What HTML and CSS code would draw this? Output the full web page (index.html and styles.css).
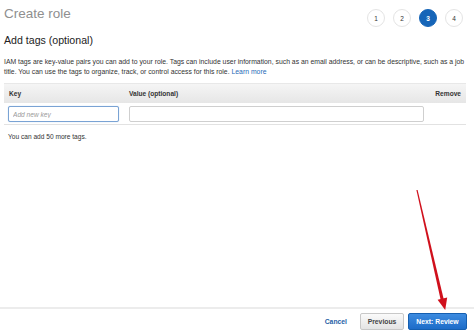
FILE: index.html
```html
<!DOCTYPE html>
<html>
<head>
<meta charset="utf-8">
<link rel="stylesheet" href="styles.css">
</head>
<body>
<div class="page">
  <div class="main">
    <div class="top">
      <h1 class="title">Create role</h1>
      <ol class="steps">
        <li class="step">1</li>
        <li class="step">2</li>
        <li class="step active">3</li>
        <li class="step">4</li>
      </ol>
    </div>
    <h2 class="subtitle">Add tags (optional)</h2>
    <p class="desc">IAM tags are key-value pairs you can add to your role. Tags can include user information, such as an email address, or can be descriptive, such as a job title. You can use the tags to organize, track, or control access for this role. <a class="link" href="#">Learn more</a></p>
    <div class="table">
      <div class="th th-key">Key</div>
      <div class="th th-value">Value (optional)</div>
      <div class="th th-remove">Remove</div>
      <div class="td td-key"><input class="input input-focus" placeholder="Add new key"></div>
      <div class="td td-value"><input class="input input-value"></div>
      <div class="td td-remove"></div>
    </div>
    <p class="note">You can add 50 more tags.</p>
  </div>
  <div class="footer">
    <a class="cancel" href="#">Cancel</a>
    <button class="btn btn-prev">Previous</button>
    <button class="btn btn-next">Next: Review</button>
  </div>
  <svg class="arrow" width="474" height="332" viewBox="0 0 474 332">
    <polygon points="417.6,189.9 416.4,190.1 440.8,300.4 443.8,299.6" fill="#d0101c"/>
    <polygon points="437.6,299.8 447.2,297.6 445.2,310" fill="#d0101c"/>
  </svg>
</div>
</body>
</html>
```
FILE: styles.css
```css
* { box-sizing: border-box; }
html, body { margin: 0; padding: 0; }
body {
  width: 474px;
  height: 332px;
  overflow: hidden;
  background: #fff;
  font-family: "Liberation Sans", Arial, sans-serif;
  color: #333;
}
.page {
  position: relative;
  width: 474px;
  height: 332px;
  display: flex;
  flex-direction: column;
}
.main {
  padding: 0 8px 0 4px;
  flex: 1;
}
.top {
  display: flex;
  justify-content: space-between;
  align-items: flex-start;
  padding-top: 4px;
}
.title {
  margin: 0;
  font-size: 13.5px;
  font-weight: normal;
  color: #8f8f8f;
  line-height: 19px;
}
.steps {
  list-style: none;
  margin: 5px 3px 0 0;
  padding: 0;
  display: flex;
  gap: 8px;
}
.step {
  width: 18px;
  height: 18px;
  border-radius: 50%;
  border: 1px solid #e4e4e4;
  font-size: 6.5px;
  color: #333;
  display: flex;
  align-items: center;
  justify-content: center;
}
.step.active {
  background: #1665b8;
  border-color: #1665b8;
  color: #fff;
  font-weight: bold;
}
.subtitle {
  margin: 6px 0 0 0;
  font-size: 10.6px;
  font-weight: normal;
  color: #222;
  line-height: 14px;
}
.desc {
  margin: 10px 0 0 0;
  font-size: 6.85px;
  line-height: 10px;
  color: #333;
}
.link {
  color: #1f6bb8;
  text-decoration: none;
}
.table {
  margin-top: 6px;
  display: grid;
  grid-template-columns: 125px 295px 1fr;
  border-bottom: 1px solid #e2e2e2;
}
.th {
  height: 20px;
  display: flex;
  align-items: center;
  font-size: 6.6px;
  font-weight: bold;
  color: #333;
  background: linear-gradient(#f5f5f5, #e6e6e6);
  border-top: 1px solid #e8e8e8;
}
.th-key { padding-left: 5px; }
.th-remove { justify-content: flex-end; padding-right: 5px; }
.td {
  padding: 3px 0 2px 0;
}
.td-key { padding-left: 4px; }
.input {
  display: block;
  height: 16px;
  border: 1px solid #cfcfcf;
  border-radius: 2px;
  font-family: "Liberation Sans", Arial, sans-serif;
  font-size: 6.6px;
  padding: 0 4px;
  outline: none;
  background: #fff;
}
.input-focus {
  width: 111px;
  border-color: #7aa3d4;
  box-shadow: 0 0 1px #9dbde3;
}
.input-focus::placeholder {
  color: #9a9a9a;
  font-style: italic;
}
.input-value { width: 295px; }
.note {
  margin: 7px 0 0 4px;
  font-size: 6.6px;
  line-height: 9px;
  color: #333;
}
.footer {
  border-top: 2px solid #ececec;
  padding: 4px 7px 2px 0;
  display: flex;
  justify-content: flex-end;
  align-items: center;
}
.cancel {
  font-size: 6.8px;
  font-weight: bold;
  color: #1f5fa6;
  text-decoration: none;
  margin-right: 13px;
}
.btn {
  height: 17px;
  border-radius: 2px;
  font-family: "Liberation Sans", Arial, sans-serif;
  font-size: 6.8px;
  font-weight: bold;
  padding: 0;
  cursor: pointer;
}
.btn-prev {
  width: 44px;
  margin-right: 4px;
  color: #444;
  border: 1px solid #c8c8c8;
  background: linear-gradient(#fafafa, #e4e4e4);
}
.btn-next {
  width: 59px;
  color: #fff;
  border: 1px solid #155fb0;
  background: linear-gradient(#3c8be0, #1d6cc8);
}
.arrow {
  position: absolute;
  left: 0;
  top: 0;
  pointer-events: none;
}
```
